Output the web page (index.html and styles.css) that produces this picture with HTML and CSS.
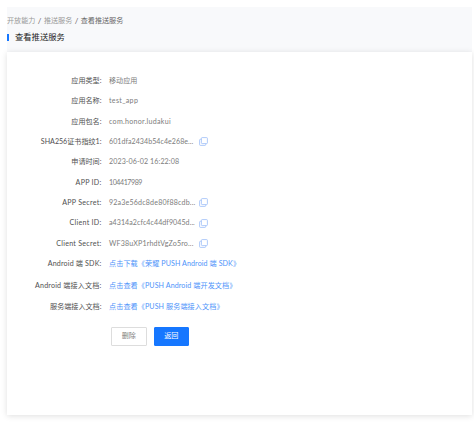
FILE: index.html
```
<!DOCTYPE html>
<html>
<head>
<meta charset="utf-8">
<title>查看推送服务</title>
<link rel="stylesheet" href="styles.css">
</head>
<body>
<svg class="defs" width="0" height="0"><symbol id="copy" viewBox="0 0 9 9"><path d="M2.4 2.3H1.4Q.6 2.3.6 3.1V7.6Q.6 8.4 1.4 8.4H5.9Q6.7 8.4 6.7 7.6V6.7"/><rect x="2.4" y=".6" width="6" height="6" rx=".8"/></symbol></svg>
<div class="page">
  <header class="head">
    <nav class="crumbs"><span>开放能力</span><i>/</i><span>推送服务</span><i>/</i><b>查看推送服务</b></nav>
    <h1 class="title">查看推送服务</h1>
  </header>
  <main class="card">
    <div class="row"><span class="label">应用类型:</span><span class="value">移动应用</span></div>
    <div class="row"><span class="label">应用名称:</span><span class="value name">test_app</span></div>
    <div class="row"><span class="label">应用包名:</span><span class="value pkg">com.honor.ludakui</span></div>
    <div class="row"><span class="label">SHA256证书指纹1:</span><span class="value hash">601dfa2434b54c4e268e...</span><svg class="copy"><use href="#copy"/></svg></div>
    <div class="row"><span class="label">申请时间:</span><span class="value time">2023-06-02 16:22:08</span></div>
    <div class="row"><span class="label latin">APP ID:</span><span class="value appid">104417989</span></div>
    <div class="row"><span class="label latin">APP Secret:</span><span class="value secret">92a3e56dc8de80f88cdb...</span><svg class="copy"><use href="#copy"/></svg></div>
    <div class="row"><span class="label latin">Client ID:</span><span class="value client">a4314a2cfc4c44df9045d...</span><svg class="copy"><use href="#copy"/></svg></div>
    <div class="row"><span class="label latin">Client Secret:</span><span class="value csecret">WF38uXP1rhdtVgZo5ro...</span><svg class="copy"><use href="#copy"/></svg></div>
    <div class="row tall"><span class="label mixed">Android 端 SDK:</span><a class="value link">点击下载《荣耀 PUSH Android 端 SDK》</a></div>
    <div class="row tall"><span class="label mixed">Android 端接入文档:</span><a class="value link">点击查看《PUSH Android 端开发文档》</a></div>
    <div class="row tall"><span class="label">服务端接入文档:</span><a class="value link">点击查看《PUSH 服务端接入文档》</a></div>
    <div class="actions"><button class="btn">删除</button><button class="btn primary">返回</button></div>
  </main>
</div>
</body>
</html>
```
FILE: styles.css
```
* { box-sizing: border-box; }
body {
  margin: 0;
  height: 423px;
  overflow: hidden;
  background: #fff;
  font: 7.1px/10px Lato, "Noto Sans CJK SC", sans-serif;
  color: #505050;
}
.defs { display: block; }
.page { margin: 7px 2px 0 7px; }
.head { height: 45px; padding-top: 9px; background: #f8f9fb; }
.crumbs { display: flex; height: 10px; color: #999; white-space: nowrap; }
.crumbs i { width: 8.5px; text-align: center; font-style: normal; font-size: 8px; color: #666; }
.crumbs b { font-weight: 400; color: #666; }
.title {
  display: flex;
  align-items: center;
  gap: 6px;
  height: 10px;
  margin: 6px 0 0;
  font-size: 8.3px;
  font-weight: 400;
  color: #222;
}
.title::before { content: ""; width: 2px; height: 7px; background: #1677ff; }
.card {
  height: 363px;
  padding-top: 18.7px;
  background: #fff;
  box-shadow: 0 1px 6px rgba(0, 0, 0, .13);
}
.row { display: flex; align-items: center; height: 20.35px; white-space: nowrap; }
.row.tall { height: 21.3px; }
.label { width: 94.5px; margin-right: 7.5px; text-align: right; }
.latin { letter-spacing: .26px; }
.mixed { letter-spacing: .18px; }
.value { color: #7c7c7c; }
.name { letter-spacing: .32px; }
.pkg { letter-spacing: .28px; }
.hash { letter-spacing: .04px; }
.time { letter-spacing: .1px; }
.appid { letter-spacing: -.45px; }
.secret { letter-spacing: .18px; }
.client { letter-spacing: .06px; }
.csecret { letter-spacing: .16px; }
.link { color: #4d93fa; letter-spacing: .1px; }
.copy {
  width: 9px;
  height: 9px;
  margin-left: auto;
  margin-right: 264px;
  fill: none;
  stroke: #9bbdf8;
  stroke-width: .8;
}
.actions { display: flex; gap: 7px; margin: 9px 0 0 104px; }
.btn {
  width: 35.5px;
  height: 19px;
  padding: 0;
  border: 1px solid #ddd;
  border-radius: 1px;
  background: #fff;
  font: inherit;
  color: #808080;
}
.primary { border-color: #1677ff; background: #1677ff; color: #fff; }
```
